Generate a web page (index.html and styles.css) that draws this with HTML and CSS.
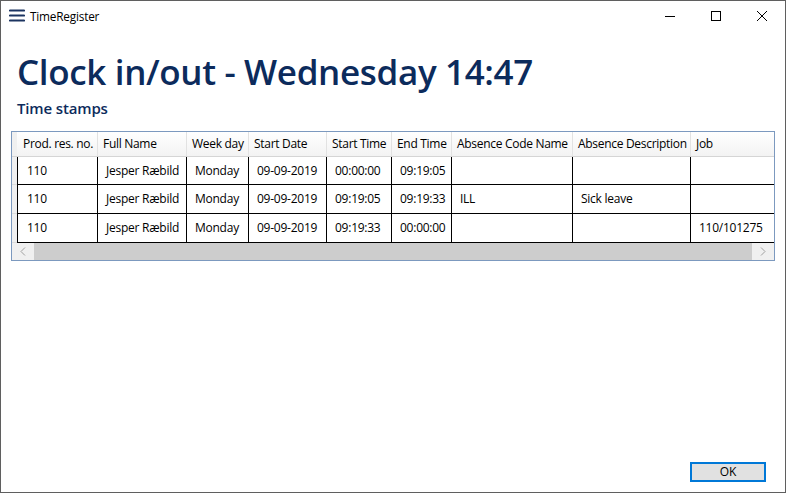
FILE: index.html
```html
<!DOCTYPE html>
<html>
<head>
<meta charset="utf-8">
<title>TimeRegister</title>
<link rel="stylesheet" href="styles.css">
</head>
<body>
<div class="window">
  <header class="titlebar">
    <svg class="menu-icon" width="16" height="14" viewBox="0 0 16 14">
      <path d="M1 1.5H15M1 6.5H15M1 11.5H15" stroke="#1c3461" stroke-width="2.2" stroke-linecap="round" fill="none"/>
    </svg>
    <span class="app-title">TimeRegister</span>
    <div class="controls">
      <span class="ctl">
        <svg width="12" height="12" viewBox="0 0 12 12"><path d="M1 6.5H11" stroke="#000" stroke-width="1" fill="none"/></svg>
      </span>
      <span class="ctl">
        <svg width="12" height="12" viewBox="0 0 12 12"><rect x="1.5" y="1.5" width="9" height="9" stroke="#000" stroke-width="1" fill="none"/></svg>
      </span>
      <span class="ctl">
        <svg width="12" height="12" viewBox="0 0 12 12"><path d="M1 1L11 11M11 1L1 11" stroke="#000" stroke-width="1" fill="none"/></svg>
      </span>
    </div>
  </header>

  <main class="content">
    <h1 class="page-title">Clock in/out - Wednesday 14:47</h1>
    <h2 class="section-title">Time stamps</h2>

    <div class="datagrid">
      <div class="grid-body">
        <div class="row header-row">
          <div class="gutter"></div>
          <div class="hcell c1">Prod. res. no.</div>
          <div class="hcell c2">Full Name</div>
          <div class="hcell c3">Week day</div>
          <div class="hcell c4">Start Date</div>
          <div class="hcell c5">Start Time</div>
          <div class="hcell c6">End Time</div>
          <div class="hcell c7">Absence Code Name</div>
          <div class="hcell c8">Absence Description</div>
          <div class="hcell c9">Job</div>
        </div>
        <div class="row data-row first-row">
          <div class="gutter"></div>
          <div class="cell c1">110</div>
          <div class="cell c2">Jesper Ræbild</div>
          <div class="cell c3">Monday</div>
          <div class="cell c4">09-09-2019</div>
          <div class="cell c5">00:00:00</div>
          <div class="cell c6">09:19:05</div>
          <div class="cell c7"></div>
          <div class="cell c8"></div>
          <div class="cell c9"></div>
        </div>
        <div class="row data-row">
          <div class="gutter"></div>
          <div class="cell c1">110</div>
          <div class="cell c2">Jesper Ræbild</div>
          <div class="cell c3">Monday</div>
          <div class="cell c4">09-09-2019</div>
          <div class="cell c5">09:19:05</div>
          <div class="cell c6">09:19:33</div>
          <div class="cell c7">ILL</div>
          <div class="cell c8">Sick leave</div>
          <div class="cell c9"></div>
        </div>
        <div class="row data-row">
          <div class="gutter"></div>
          <div class="cell c1">110</div>
          <div class="cell c2">Jesper Ræbild</div>
          <div class="cell c3">Monday</div>
          <div class="cell c4">09-09-2019</div>
          <div class="cell c5">09:19:33</div>
          <div class="cell c6">00:00:00</div>
          <div class="cell c7"></div>
          <div class="cell c8"></div>
          <div class="cell c9">110/101275</div>
        </div>
      </div>
      <div class="hscroll">
        <span class="arrow">
          <svg width="6" height="9" viewBox="0 0 6 9"><path d="M5 0.5L1 4.5L5 8.5" stroke="#a0a0a0" stroke-width="1" fill="none"/></svg>
        </span>
        <span class="thumb"></span>
        <span class="arrow">
          <svg width="6" height="9" viewBox="0 0 6 9"><path d="M1 0.5L5 4.5L1 8.5" stroke="#a0a0a0" stroke-width="1" fill="none"/></svg>
        </span>
      </div>
    </div>
  </main>

  <footer class="footer">
    <button class="ok-btn">OK</button>
  </footer>
</div>
</body>
</html>
```

FILE: styles.css
```css
* { box-sizing: border-box; }

html, body {
  margin: 0;
  padding: 0;
  background: #ffffff;
}

body {
  font-family: "Open Sans", "Noto Sans", sans-serif;
  color: #000;
}

.window {
  width: 786px;
  height: 493px;
  border: 1px solid #5f5f5f;
  background: #fff;
  display: flex;
  flex-direction: column;
}

.titlebar {
  height: 30px;
  display: flex;
  align-items: center;
  flex: none;
}

.menu-icon {
  margin-left: 8px;
  margin-top: -1px;
}

.app-title {
  margin-left: 5px;
  font-size: 11.8px;
  letter-spacing: -0.2px;
  margin-top: -1px;
}

.controls {
  margin-left: auto;
  display: flex;
  height: 100%;
}

.ctl {
  width: 46px;
  height: 30px;
  display: flex;
  align-items: center;
  justify-content: center;
}

.content {
  flex: 1;
  padding: 0 10px;
}

.page-title {
  margin: 17px 0 0 6px;
  font-size: 35px;
  font-weight: 600;
  letter-spacing: -0.35px;
  color: #0c2b5c;
  line-height: 48px;
}

.section-title {
  margin: 2px 0 0 6px;
  font-size: 15px;
  font-weight: 600;
  letter-spacing: -0.15px;
  color: #0c2b5c;
  line-height: 20px;
}

.datagrid {
  margin-top: 13px;
  width: 764px;
  border: 1px solid #7c99bf;
  overflow: hidden;
}

.grid-body {
  width: 762px;
  overflow: hidden;
}

.row {
  display: flex;
  width: max-content;
}

.gutter {
  width: 5px;
  flex: none;
  background: #f0f0f0;
}

.header-row {
  height: 25px;
  background: linear-gradient(#ffffff, #f3f3f3);
  border-bottom: 1px solid #d5d5d5;
}

.hcell {
  flex: none;
  height: 24px;
  border-left: 1px solid #e2e2e2;
  padding-left: 5px;
  font-size: 12px;
  letter-spacing: -0.3px;
  line-height: 24px;
  white-space: nowrap;
}

.header-row .c1 { border-left-color: transparent; }

.data-row {
  height: 29px;
}

.data-row.first-row {
  height: 28px;
}

.data-row .gutter {
  border-bottom: 1px solid #dcdcdc;
}

.cell {
  flex: none;
  height: 100%;
  border-left: 1px solid #000;
  border-bottom: 1px solid #000;
  padding-left: 8px;
  font-size: 12px;
  letter-spacing: -0.25px;
  line-height: 28px;
  white-space: nowrap;
}

.first-row .cell { line-height: 27px; }

.data-row .c1 { padding-left: 9px; }

.c1 { width: 80px; }
.c2 { width: 89px; }
.c3 { width: 62px; }
.c4 { width: 78px; }
.c5 { width: 65px; }
.c6 { width: 60px; }
.c7 { width: 121px; }
.c8 { width: 118px; }
.c9 { width: 100px; }

.hscroll {
  height: 17px;
  display: flex;
  background: #f0f0f0;
}

.arrow {
  width: 22px;
  flex: none;
  display: flex;
  align-items: center;
  justify-content: center;
}

.thumb {
  flex: 1;
  background: #cdcdcd;
}

.footer {
  flex: none;
  display: flex;
  justify-content: flex-end;
  padding: 0 19px 10px 0;
}

.ok-btn {
  width: 76px;
  height: 20px;
  border: 1px solid #0078d7;
  box-shadow: inset 0 0 0 1px #0078d7;
  background: #e1e1e1;
  font-family: "Open Sans", "Noto Sans", sans-serif;
  font-size: 12px;
  color: #000;
  padding: 0;
  line-height: 16px;
}
```
